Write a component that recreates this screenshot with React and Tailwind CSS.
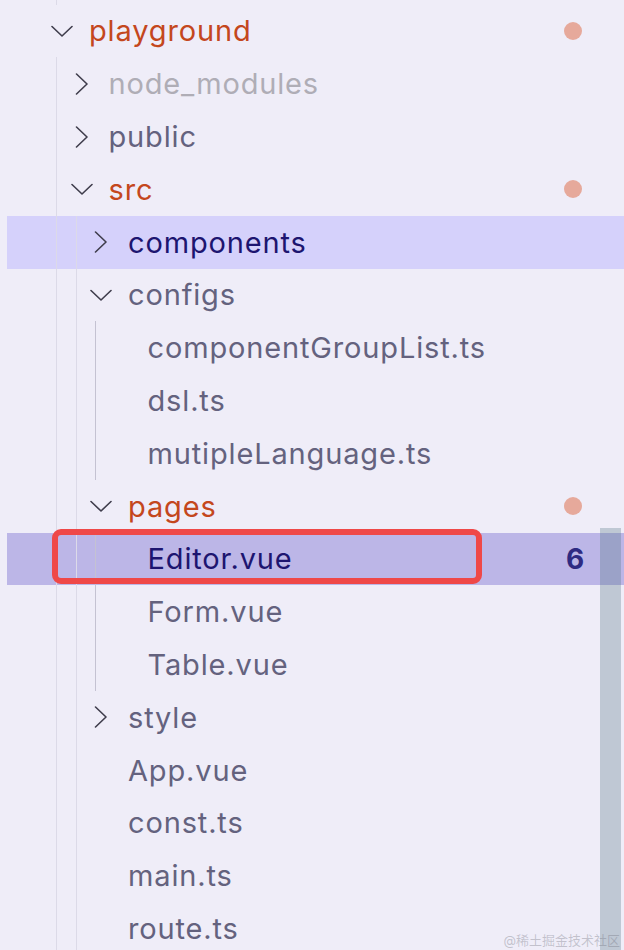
import React from "react";

const PL = ["pl-[44px]", "pl-[63.5px]", "pl-[83px]", "pl-[102.5px]"];

const ORANGE = "text-[#c4471d]";
const NORMAL = "text-[#64627e]";
const DIM = "text-[#afadb6]";
const SEL = "text-[#1d1570]";

function Chevron({ open }) {
  return (
    <svg width="22" height="22" viewBox="0 0 22 22" className="shrink-0">
      {open ? (
        <polyline points="1,6.5 11,16 21,6.5" fill="none" stroke="#3f3d4c" strokeWidth="1.6" strokeLinecap="round" strokeLinejoin="round" />
      ) : (
        <polyline points="5.5,1 16,11 5.5,21" fill="none" stroke="#3f3d4c" strokeWidth="1.6" strokeLinecap="round" strokeLinejoin="round" />
      )}
    </svg>
  );
}

function Row({ level, name, chev, color = NORMAL, bg = "", dot, badge, children }) {
  return (
    <div className={`relative flex items-center h-[52.8px] ml-[7px] pr-[42px] ${PL[level]} ${bg}`}>
      <div className="w-[22px] h-[22px] shrink-0">{chev ? <Chevron open={chev === "open"} /> : null}</div>
      <span className={`ml-[16px] flex-1 text-[29px] leading-none tracking-[0.85px] ${color}`}>{name}</span>
      {dot ? <span className="w-[18px] h-[18px] rounded-full bg-[#e6a99b]" /> : null}
      {badge ? <span className="w-[18px] text-center text-[28px] font-bold leading-none text-[#2e2a82] translate-x-[2px]">{badge}</span> : null}
      {children}
    </div>
  );
}

function Group({ guide, children }) {
  return (
    <div className="relative">
      {children}
      <div className={`pointer-events-none absolute top-0 bottom-0 w-px z-10 ${guide}`} />
    </div>
  );
}

export default function App() {
  return (
    <div
      className="relative w-[624px] h-[950px] overflow-hidden bg-[#efedf8]"
      style={{ fontFamily: "Inter, 'Noto Sans', 'Noto Sans CJK SC', sans-serif" }}
    >
      <div className="relative h-[4.6px]">
        <div className="absolute left-[56px] top-0 bottom-0 w-px bg-[#dcdae8]" />
      </div>
      <Row level={0} name="playground" chev="open" color={ORANGE} dot />
      <Group guide="left-[56px] bg-[#dcdae8]">
        <Row level={1} name="node_modules" chev="closed" color={DIM} />
        <Row level={1} name="public" chev="closed" />
        <Row level={1} name="src" chev="open" color={ORANGE} dot />
        <Group guide="left-[75.5px] bg-[#dcdae8]">
          <Row level={2} name="components" chev="closed" color={SEL} bg="bg-[#d5d1fb]" />
          <Row level={2} name="configs" chev="open" />
          <Group guide="left-[94.5px] bg-[#c4c2d2]">
            <Row level={3} name="componentGroupList.ts" />
            <Row level={3} name="dsl.ts" />
            <Row level={3} name="mutipleLanguage.ts" />
          </Group>
          <Row level={2} name="pages" chev="open" color={ORANGE} dot />
          <Group guide="left-[94.5px] bg-[#c4c2d2]">
            <Row level={3} name="Editor.vue" color={SEL} bg="bg-[#bcb6e7]" badge="6">
              <div className="pointer-events-none absolute left-[45px] w-[430px] top-[-3.6px] bottom-[1.4px] border-[6px] border-[#ef4848] rounded-[9px] z-20" />
            </Row>
            <Row level={3} name="Form.vue" />
            <Row level={3} name="Table.vue" />
          </Group>
          <Row level={2} name="style" chev="closed" />
          <Row level={2} name="App.vue" />
          <Row level={2} name="const.ts" />
          <Row level={2} name="main.ts" />
          <Row level={2} name="route.ts" />
        </Group>
      </Group>

      <div className="pointer-events-none absolute left-[600px] w-[21px] top-[528px] bottom-0 bg-[rgba(81,116,130,0.3)] z-30" />
      <div className="pointer-events-none absolute right-[4px] bottom-[3px] whitespace-nowrap text-[13px] leading-none text-[rgba(110,110,122,0.34)] z-40">
        @稀土掘金技术社区
      </div>
    </div>
  );
}
